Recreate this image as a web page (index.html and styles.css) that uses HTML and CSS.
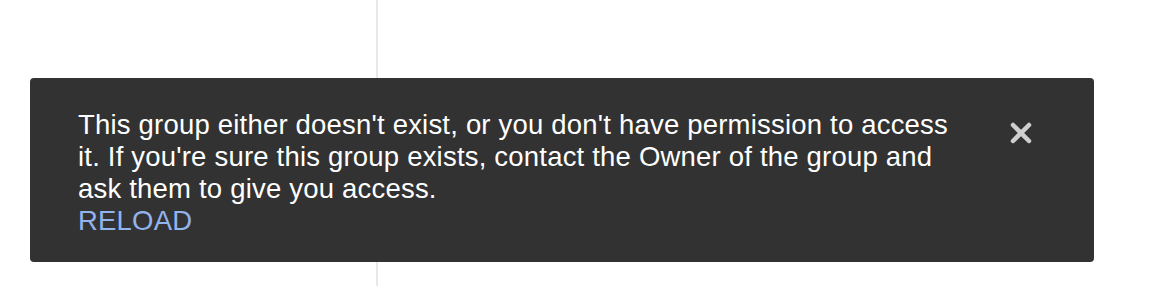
FILE: index.html
```html
<!DOCTYPE html>
<html lang="en">

<head>
    <meta charset="UTF-8">
    <meta name="viewport" content="width=device-width, initial-scale=1.0">
    <title>Groups</title>
    <link rel="stylesheet" href="styles.css">
</head>

<body>

    <div class="page">
        <div class="sidebar"></div>
        <div class="content"></div>
    </div>

    <div class="toast" role="alert">
        <div class="toast-text">
            This group either doesn't exist, or you don't have permission to access it. If you're sure this group
            exists, contact the Owner of the group and ask them to give you access.
            <a href="#" class="toast-action">RELOAD</a>
        </div>
        <button class="toast-close" aria-label="Close">
            <svg width="22" height="22" viewBox="0 0 22 22">
                <line x1="3" y1="3" x2="19" y2="19" />
                <line x1="19" y1="3" x2="3" y2="19" />
            </svg>
        </button>
    </div>

</body>
</html>
```

FILE: styles.css
```css
body {
    font-family: "Liberation Sans", Arial, sans-serif;
    background-color: #fff;
    margin: 0;
}

.page {
    display: flex;
    height: 286px;
}

.sidebar {
    width: 376px;
    border-right: 2px solid #e8e8e8;
}

.content {
    flex: 1;
}

.toast {
    position: absolute;
    left: 30px;
    top: 78px;
    width: 1064px;
    height: 184px;
    box-sizing: border-box;
    padding: 31px 0 24px 48px;
    background-color: #323232;
    border-radius: 4px;
    display: flex;
    align-items: flex-start;
}

.toast-text {
    flex: 0 0 890px;
    color: #fff;
    font-size: 27.5px;
    line-height: 32px;
    letter-spacing: 0.2px;
}

.toast-action {
    display: block;
    color: #92b3ec;
    text-decoration: none;
}

.toast-close {
    margin: 4px 0 0 33px;
    width: 40px;
    height: 40px;
    padding: 0;
    border: none;
    background: none;
    display: flex;
    align-items: center;
    justify-content: center;
    cursor: pointer;
}

.toast-close line {
    stroke: #cfcfcf;
    stroke-width: 4.5;
    stroke-linecap: round;
}
```
